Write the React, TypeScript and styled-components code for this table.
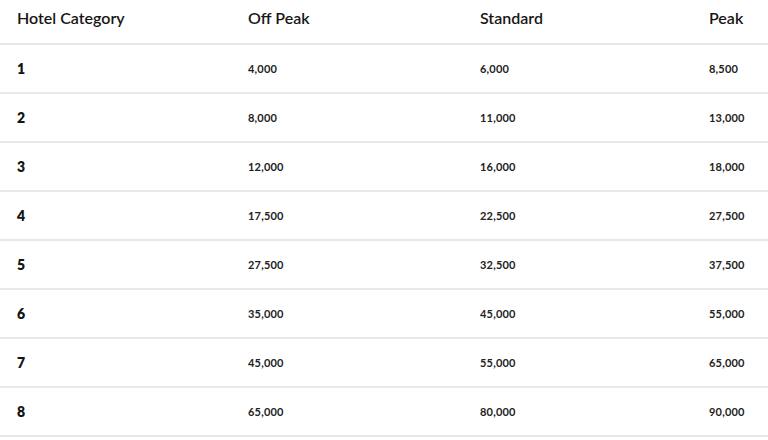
import styled, { createGlobalStyle } from "styled-components";

const GlobalStyle = createGlobalStyle`
  html, body {
    margin: 0;
    padding: 0;
    background: #fff;
  }
  body {
    font-family: Lato, "Noto Sans", sans-serif;
    color: #1f1f1f;
    overflow: hidden;
  }
`;

const Table = styled.div`
  width: 768px;
`;

const Row = styled.div<{ $head?: boolean }>`
  display: grid;
  grid-template-columns: 231px 232px 229px 1fr;
  align-items: center;
  height: ${(p) => (p.$head ? "35px" : "47px")};
  padding: ${(p) => (p.$head ? "0 0 8px 17px" : "0 0 0 17px")};
  border-bottom: 2px solid #e8e8e8;
  box-sizing: content-box;
`;

const HeadCell = styled.div`
  font-size: 16px;
  font-weight: 600;
  color: #161616;
`;

const CatCell = styled.div`
  font-size: 14px;
  font-weight: 800;
  color: #141414;
`;

const ValueCell = styled.div`
  font-size: 11px;
  font-weight: 700;
  color: #222;
  letter-spacing: 0.2px;
`;

const rows = [
  ["1", "4,000", "6,000", "8,500"],
  ["2", "8,000", "11,000", "13,000"],
  ["3", "12,000", "16,000", "18,000"],
  ["4", "17,500", "22,500", "27,500"],
  ["5", "27,500", "32,500", "37,500"],
  ["6", "35,000", "45,000", "55,000"],
  ["7", "45,000", "55,000", "65,000"],
  ["8", "65,000", "80,000", "90,000"],
];

const App = () => {
  return (
    <>
      <GlobalStyle />
      <Table>
        <Row $head>
          <HeadCell>Hotel Category</HeadCell>
          <HeadCell>Off Peak</HeadCell>
          <HeadCell>Standard</HeadCell>
          <HeadCell>Peak</HeadCell>
        </Row>
        {rows.map(([cat, off, std, peak]) => (
          <Row key={cat}>
            <CatCell>{cat}</CatCell>
            <ValueCell>{off}</ValueCell>
            <ValueCell>{std}</ValueCell>
            <ValueCell>{peak}</ValueCell>
          </Row>
        ))}
      </Table>
    </>
  );
};

export default App;
